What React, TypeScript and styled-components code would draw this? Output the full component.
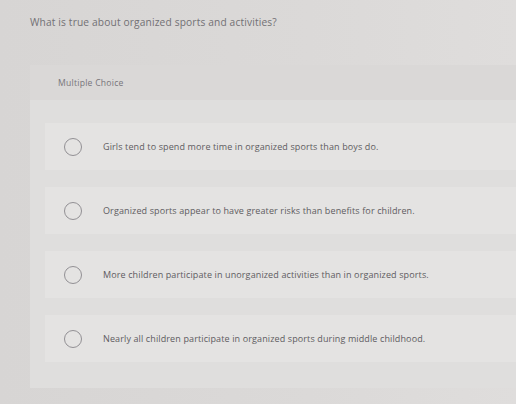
import React from "react";
import styled, { createGlobalStyle } from "styled-components";

const Global = createGlobalStyle`
  html, body { margin: 0; padding: 0; background: #d9d7d6; }
  body { width: 516px; height: 404px; overflow: hidden; font-family: "Open Sans", Lato, sans-serif; }
`;

const Page = styled.div`
  width: 516px;
  height: 404px;
  box-sizing: border-box;
  padding: 15px 0 0 30px;
  background: linear-gradient(90deg, #d7d5d4 0%, #dbd9d8 60%, #dfdddc 100%);
  display: flex;
  flex-direction: column;
`;

const Question = styled.div`
  font-size: 10.2px;
  letter-spacing: 0.15px;
  color: #727074;
  line-height: 14px;
  height: 50px;
`;

const Panel = styled.div`
  background: #dfdedd;
  display: flex;
  flex-direction: column;
  height: 323px;
`;

const Header = styled.div`
  height: 35px;
  background: #dad8d7;
  display: flex;
  align-items: center;
  padding-left: 28px;
  font-size: 8.6px;
  letter-spacing: 0.25px;
  color: #77757a;
`;

const Options = styled.div`
  display: flex;
  flex-direction: column;
  gap: 17px;
  padding: 23px 0 0 15px;
`;

const Option = styled.div`
  height: 47px;
  background: #e4e3e2;
  display: flex;
  align-items: center;
  padding-left: 19px;
  gap: 21px;
`;

const Radio = styled.span`
  width: 16px;
  height: 16px;
  border-radius: 50%;
  border: 1.5px solid #929094;
  flex: none;
`;

const Label = styled.span`
  font-size: 9px;
  letter-spacing: 0.12px;
  color: #5e5c61;
`;

const options = [
  "Girls tend to spend more time in organized sports than boys do.",
  "Organized sports appear to have greater risks than benefits for children.",
  "More children participate in unorganized activities than in organized sports.",
  "Nearly all children participate in organized sports during middle childhood.",
];

export default function App() {
  return (
    <>
      <Global />
      <Page>
        <Question>What is true about organized sports and activities?</Question>
        <Panel>
          <Header>Multiple Choice</Header>
          <Options>
            {options.map((o) => (
              <Option key={o}>
                <Radio />
                <Label>{o}</Label>
              </Option>
            ))}
          </Options>
        </Panel>
      </Page>
    </>
  );
}
